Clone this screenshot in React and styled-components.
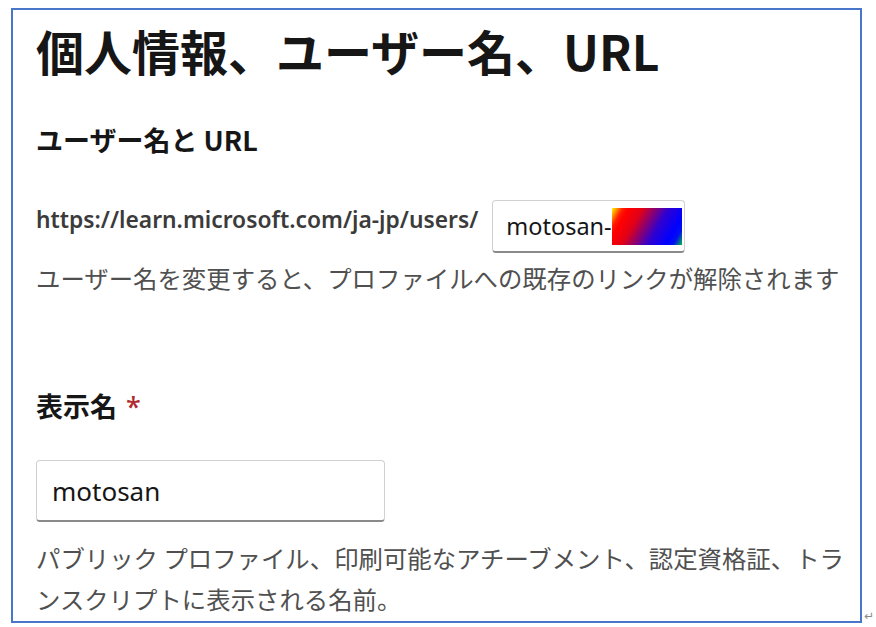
import React from 'react';
import styled, { createGlobalStyle } from 'styled-components';

const GlobalStyle = createGlobalStyle`
  html, body {
    margin: 0;
    padding: 0;
    background: #ffffff;
  }
  body {
    font-family: "Noto Sans", "Noto Sans CJK JP", sans-serif;
    color: #161616;
  }
`;

const Page = styled.div`
  display: flex;
  align-items: flex-end;
  padding: 8px 0 0 11px;
`;

const Frame = styled.section`
  box-sizing: border-box;
  width: 851px;
  height: 615px;
  border: 2px solid #4a76c9;
  padding: 11px 12px 0 23px;
  overflow: hidden;
`;

const ParaMark = styled.span`
  font-family: "DejaVu Sans", sans-serif;
  font-size: 12px;
  line-height: 12px;
  color: #8a8a8a;
  margin: 0 0 1px 2px;
`;

const Title = styled.h1`
  margin: 0;
  font-family: "Noto Sans CJK JP", sans-serif;
  font-size: 48px;
  line-height: 58px;
  font-weight: 700;
  color: #161616;
`;

const SubHeading = styled.h2`
  margin: ${(p) => p.$top}px 0 0;
  font-family: "Noto Sans CJK JP", sans-serif;
  font-size: 27px;
  line-height: 36px;
  font-weight: 700;
  color: #161616;
`;

const Required = styled.span`
  color: #b02a30;
  font-family: "Noto Sans", sans-serif;
  font-weight: 500;
  font-size: 27px;
  margin-left: 9px;
`;

const UrlRow = styled.div`
  display: flex;
  align-items: flex-start;
  gap: 14px;
  margin-top: 42px;
`;

const UrlPrefix = styled.span`
  font-family: "Noto Sans", sans-serif;
  font-size: 22.8px;
  font-weight: 600;
  line-height: 30px;
  color: #3b3b3b;
  padding-top: 5px;
`;

const Field = styled.div`
  box-sizing: border-box;
  display: flex;
  align-items: center;
  width: ${(p) => p.$width}px;
  height: ${(p) => p.$height}px;
  margin-top: ${(p) => p.$top || 0}px;
  padding-left: ${(p) => p.$pad}px;
  border: 1px solid #d1d1d1;
  border-bottom: 2px solid #8a8a8a;
  border-radius: 4px;
  background: #fff;
  font-family: "Noto Sans", sans-serif;
  font-size: ${(p) => p.$size}px;
  color: #161616;
`;

const Selection = styled.span`
  display: inline-block;
  width: 70px;
  height: 37px;
  margin-left: 0;
  background: linear-gradient(
    120deg,
    #ffff00 0%,
    #ff2000 12%,
    #ff0000 18%,
    #e00018 34%,
    #3000d0 62%,
    #0000ff 82%,
    #0010f0 90%,
    #00c040 100%
  );
`;

const Help = styled.p`
  margin: ${(p) => p.$top}px 0 0;
  font-family: "Noto Sans CJK JP", sans-serif;
  font-size: 24.4px;
  line-height: 41px;
  color: #505050;
`;

export default function App() {
  return (
    <>
      <GlobalStyle />
      <Page>
        <Frame>
          <Title>個人情報、ユーザー名、URL</Title>
          <SubHeading $top={43}>ユーザー名と URL</SubHeading>
          <UrlRow>
            <UrlPrefix>https://learn.microsoft.com/ja-jp/users/</UrlPrefix>
            <Field $width={193} $height={53} $pad={13} $size={23.5}>
              motosan-<Selection />
            </Field>
          </UrlRow>
          <Help $top={4}>
            ユーザー名を変更すると、プロファイルへの既存のリンクが解除されます
          </Help>
          <SubHeading $top={90}>
            表示名<Required>*</Required>
          </SubHeading>
          <Field $width={349} $height={62} $pad={15} $size={26} $top={35}>
            motosan
          </Field>
          <Help $top={15}>
            パブリック プロファイル、印刷可能なアチーブメント、認定資格証、トランスクリプトに表示される名前。
          </Help>
        </Frame>
        <ParaMark>↵</ParaMark>
      </Page>
    </>
  );
}
